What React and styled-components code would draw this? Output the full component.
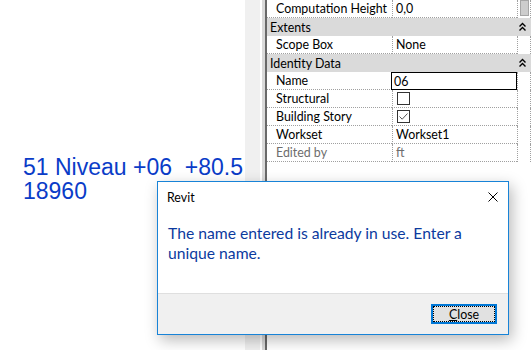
import React from "react";
import styled, { createGlobalStyle } from "styled-components";

const GlobalStyle = createGlobalStyle`
  html, body {
    margin: 0;
    padding: 0;
    width: 531px;
    height: 350px;
    overflow: hidden;
    background: #fff;
  }
  * {
    box-sizing: border-box;
  }
`;

const uiFont = `"Lato", "Noto Sans", sans-serif`;

const Screen = styled.div`
  position: relative;
  display: flex;
  width: 531px;
  height: 350px;
  font-family: ${uiFont};
  font-size: 12.4px;
  color: #000;
`;

const Canvas = styled.div`
  width: 245px;
  padding: 155px 0 0 23px;
  background: #fff;
  font-family: "Liberation Sans", Arial, sans-serif;
  font-size: 23px;
  line-height: 24px;
  color: #0a3cc8;
  white-space: pre;
`;

const Strip = styled.div`
  width: ${(p) => p.w}px;
  flex-shrink: 0;
  background: ${(p) => p.bg};
`;

const Panel = styled.div`
  flex: 1;
  background: #fff;
`;

const PropGrid = styled.div`
  display: grid;
  grid-template-columns: 125px 125px 14px;
  grid-auto-rows: 18px;
`;

const Cell = styled.div`
  display: flex;
  align-items: center;
  height: 18px;
  padding-left: ${(p) => (p.value ? 3 : 9)}px;
  border-bottom: 1px dotted #a0a0a0;
  border-left: ${(p) => (p.value ? "1px dotted #a0a0a0" : "none")};
  color: ${(p) => (p.muted ? "#6d6d6d" : "#000")};
  white-space: nowrap;
  overflow: hidden;
`;

const NameBox = styled.div`
  display: flex;
  align-items: center;
  height: 18px;
  padding-left: 2px;
  border: 1px solid #000;
  margin-left: -1px;
  background: #fff;
`;

const ScrollCell = styled.div`
  height: 18px;
  border-left: 1px dotted #a0a0a0;
  border-right: 1px dotted #a0a0a0;
  padding: 0 1px 0 2px;
`;

const Thumb = styled.div`
  height: 16px;
  background: #cdcdcd;
  border: 1px solid #a6a6a6;
`;

const HeaderRow = styled.div`
  grid-column: 1 / -1;
  display: grid;
  grid-template-columns: 250px 14px;
  align-items: center;
  background: #dadada;
  height: 18px;
`;

const HeaderLabel = styled.span`
  padding-left: 3px;
`;

const Chevron = styled.svg`
  margin-left: 2px;
`;

const CheckBox = styled.div`
  width: 13px;
  height: 13px;
  margin-left: 1px;
  border: 1px solid #333;
  background: #fff;
  display: flex;
  align-items: center;
  justify-content: center;
`;

const Dialog = styled.div`
  position: absolute;
  left: 157px;
  top: 181px;
  width: 352px;
  height: 154px;
  display: flex;
  flex-direction: column;
  background: #fff;
  border: 1px solid #1883d7;
  box-shadow: 3px 5px 14px rgba(0, 0, 0, 0.28);
  font-family: ${uiFont};
`;

const TitleBar = styled.div`
  height: 30px;
  display: flex;
  align-items: center;
  justify-content: space-between;
  padding: 0 10px 0 9px;
  font-size: 12.4px;
`;

const CloseX = styled.svg`
  display: block;
`;

const Message = styled.div`
  flex: 1;
  padding: 11px 0 0 10px;
  width: 322px;
  font-size: 15.7px;
  line-height: 20px;
  color: #0b3a9e;
`;

const Footer = styled.div`
  height: 41px;
  border-top: 1px solid #dfdfdf;
  background: #f0f0f0;
  display: flex;
  justify-content: flex-end;
  align-items: flex-start;
  padding: 10px 11px 0 0;
`;

const Button = styled.div`
  width: 66px;
  height: 20px;
  border: 2px solid #0078d7;
  background: #e1e1e1;
  display: flex;
`;

const Focus = styled.div`
  flex: 1;
  border: 1px dotted #000;
  display: flex;
  align-items: center;
  justify-content: center;
  font-size: 12.4px;
  u {
    text-decoration-thickness: 1px;
  }
`;

const rows = [
  { type: "row", label: "Computation Height", value: "0,0", thumb: true },
  { type: "header", label: "Extents" },
  { type: "row", label: "Scope Box", value: "None" },
  { type: "header", label: "Identity Data" },
  { type: "name", label: "Name", value: "06" },
  { type: "check", label: "Structural", checked: false },
  { type: "check", label: "Building Story", checked: true },
  { type: "row", label: "Workset", value: "Workset1" },
  { type: "row", label: "Edited by", value: "ft", muted: true },
];

const CollapseIcon = () => (
  <Chevron width="7" height="10" viewBox="0 0 7 10">
    <path d="M0.5 4.5 L3.5 1.5 L6.5 4.5 M0.5 8.5 L3.5 5.5 L6.5 8.5" fill="none" stroke="#000" strokeWidth="1.4" />
  </Chevron>
);

const App = () => {
  return (
    <>
      <GlobalStyle />
      <Screen>
        <Canvas>{"51 Niveau +06  +80.5\n18960"}</Canvas>
        <Strip w={15} bg="#f0f0f0" />
        <Strip w={2} bg="#ffffff" />
        <Strip w={3} bg="#dadada" />
        <Strip w={2} bg="#696969" />
        <Panel>
          <PropGrid>
            {rows.map((r, i) => {
              if (r.type === "header") {
                return (
                  <HeaderRow key={i}>
                    <HeaderLabel>{r.label}</HeaderLabel>
                    <CollapseIcon />
                  </HeaderRow>
                );
              }
              return (
                <React.Fragment key={i}>
                  <Cell muted={r.muted}>{r.label}</Cell>
                  {r.type === "name" ? (
                    <NameBox>{r.value}</NameBox>
                  ) : r.type === "check" ? (
                    <Cell value>
                      <CheckBox>
                        {r.checked && (
                          <svg width="11" height="11" viewBox="0 0 11 11">
                            <path d="M1.5 5.5 L4.2 8.2 L9.5 2.5" fill="none" stroke="#555" strokeWidth="1" />
                          </svg>
                        )}
                      </CheckBox>
                    </Cell>
                  ) : (
                    <Cell value muted={r.muted}>
                      {r.value}
                    </Cell>
                  )}
                  <ScrollCell>{r.thumb && <Thumb />}</ScrollCell>
                </React.Fragment>
              );
            })}
          </PropGrid>
        </Panel>

        <Dialog>
          <TitleBar>
            <span>Revit</span>
            <CloseX width="10" height="10" viewBox="0 0 10 10">
              <path d="M0.5 0.5 L9.5 9.5 M9.5 0.5 L0.5 9.5" stroke="#000" strokeWidth="1" />
            </CloseX>
          </TitleBar>
          <Message>The name entered is already in use. Enter a unique name.</Message>
          <Footer>
            <Button>
              <Focus>
                <span>
                  <u>C</u>lose
                </span>
              </Focus>
            </Button>
          </Footer>
        </Dialog>
      </Screen>
    </>
  );
};

export default App;
